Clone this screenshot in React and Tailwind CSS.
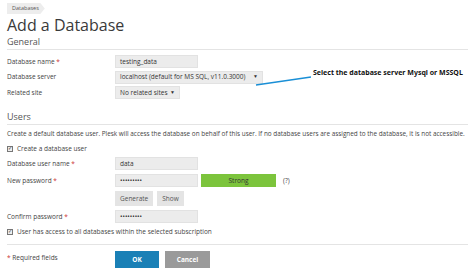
import React from 'react';

const font = { fontFamily: '"Open Sans", "Noto Sans", sans-serif' };

function Row({ label, required, children, className = '' }) {
  return (
    <div className={`flex items-center ${className}`}>
      <div className="w-[108px] shrink-0 text-[6.5px] text-[#444]">
        {label}
        {required && <span className="text-[#c33]"> *</span>}
      </div>
      {children}
    </div>
  );
}

function Field({ value, w = 'w-[83px]', children }) {
  return (
    <div className={`${w} h-[13px] bg-[#ececec] border border-[#e2e2e2] flex items-center px-[4px] text-[6.5px] text-[#333]`}>
      {value}
      {children}
    </div>
  );
}

export default function App() {
  return (
    <div className="w-[474px] h-[280px] bg-white overflow-hidden relative pl-[7px] pr-[6px]" style={font}>
      <div className="pt-[3px] flex">
        <div className="flex items-center h-[11px] bg-[#ededed] pl-[5px] pr-[6px] text-[5.5px] text-[#555] [clip-path:polygon(0_0,88%_0,100%_50%,88%_100%,0_100%)]">
          Databases
        </div>
      </div>
      <h1 className="text-[16px] leading-[20px] text-[#3a3a3a] mt-[1px]">Add a Database</h1>

      <div className="mt-[1px] text-[9px] leading-[12px] text-[#555] border-b border-[#e4e4e4] pb-[1px]">General</div>

      <div className="mt-[5px] flex flex-col gap-[2.5px]">
        <Row label="Database name" required>
          <Field value="testing_data" />
        </Row>
        <Row label="Database server">
          <Field value="localhost (default for MS SQL, v11.0.3000)" w="w-[148px] justify-between">
            <span className="text-[5px]">▼</span>
          </Field>
        </Row>
        <Row label="Related site">
          <Field value="No related sites" w="w-[65px] justify-between">
            <span className="text-[5px]">▼</span>
          </Field>
        </Row>
      </div>

      <div className="mt-[12px] text-[9px] leading-[12px] text-[#555] border-b border-[#e4e4e4] pb-[1px]">Users</div>
      <div className="mt-[4px] text-[6.4px] leading-[9px] text-[#444] whitespace-nowrap">
        Create a default database user. Plesk will access the database on behalf of this user. If no database users are assigned to the database, it is not accessible.
      </div>
      <div className="mt-[6px] flex items-center gap-[4px] text-[6.5px] leading-[9px] text-[#444]">
        <span className="w-[6px] h-[6px] border border-[#777] bg-[#eee] flex items-center justify-center text-[5px] leading-none text-[#333]">✓</span>
        Create a database user
      </div>

      <div className="mt-[4px] flex flex-col gap-[4px]">
        <Row label="Database user name" required>
          <Field value="data" />
        </Row>
        <Row label="New password" required>
          <Field value="•••••••••" />
          <div className="ml-[3px] w-[75px] h-[13px] bg-[#7cc43c] flex items-center justify-center text-[6.5px] text-[#333]">Strong</div>
          <span className="ml-[7px] text-[6.5px] text-[#444]">(?)</span>
        </Row>
        <Row label="">
          <div className="flex gap-[4px]">
            <div className="h-[15px] px-[5px] bg-[#e4e4e4] flex items-center text-[6.5px] text-[#555]">Generate</div>
            <div className="h-[15px] px-[5px] bg-[#e4e4e4] flex items-center text-[6.5px] text-[#555]">Show</div>
          </div>
        </Row>
        <Row label="Confirm password" required>
          <Field value="•••••••••" />
        </Row>
      </div>

      <div className="mt-[4px] flex items-center gap-[4px] text-[6.5px] leading-[9px] text-[#444]">
        <span className="w-[6px] h-[6px] border border-[#777] bg-[#eee] flex items-center justify-center text-[5px] leading-none">✓</span>
        User has access to all databases within the selected subscription
      </div>

      <div className="mt-[8px] border-t border-[#e4e4e4] pt-[6px] flex items-start">
        <div className="w-[108px] text-[6.5px] text-[#444] pt-[2px]"><span className="text-[#c33]">*</span> Required fields</div>
        <div className="flex gap-[6px]">
          <div className="w-[44px] h-[17px] bg-[#1a80b6] text-white font-bold text-[6.5px] flex items-center justify-center">OK</div>
          <div className="w-[45px] h-[17px] bg-[#9a9a9a] text-white font-bold text-[6.5px] flex items-center justify-center">Cancel</div>
        </div>
      </div>

      <svg className="absolute left-[255px] top-[74px]" width="60" height="14">
        <line x1="1" y1="11" x2="56" y2="3" stroke="#1a8fd6" strokeWidth="1.5" />
      </svg>
      <div className="absolute left-[313px] top-[68px] text-[7px] font-bold text-[#111]" style={{ fontFamily: '"Noto Sans", sans-serif' }}>
        Select the database server Mysql or MSSQL
      </div>
    </div>
  );
}
